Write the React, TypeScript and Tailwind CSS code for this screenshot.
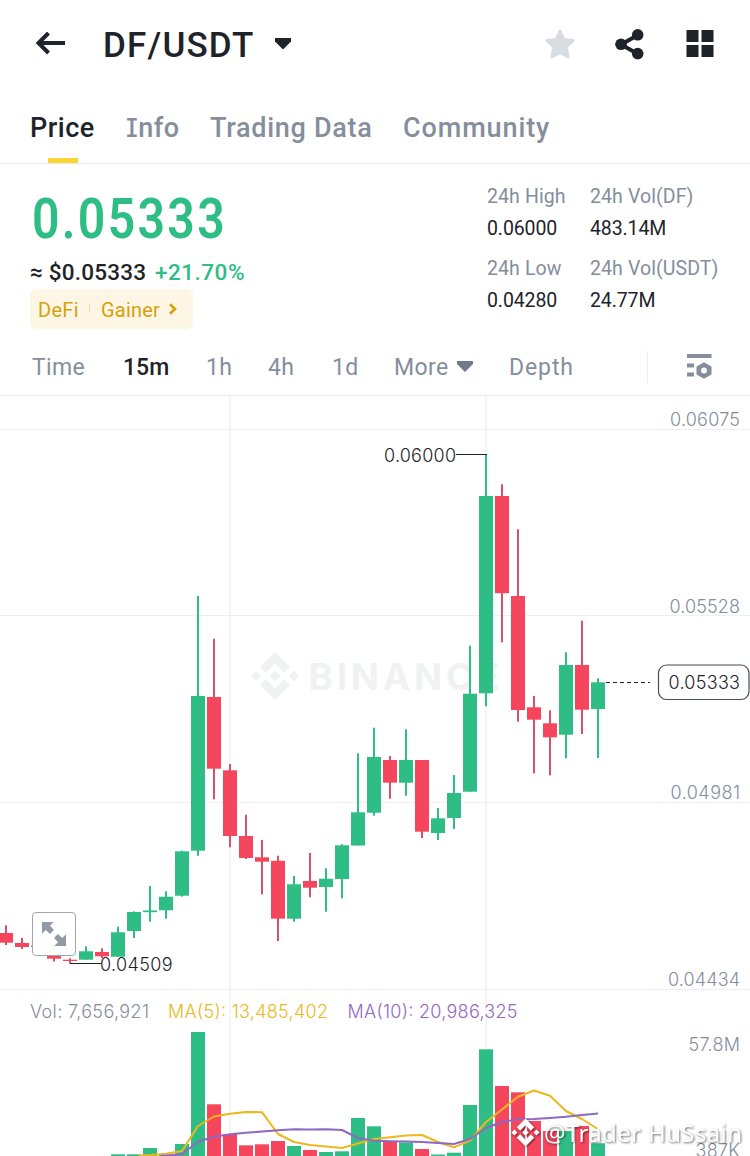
import { useState } from 'react';
import clsx from 'clsx';

type Candle = {
  up: boolean;
  top: number;
  bottom: number;
  high: number;
  low: number;
  vol?: number;
};

const GREEN = '#2ebd85';
const RED = '#f6465d';
const STEP = 16;

// y positions on the chart canvas, one candle every 16px
const candles: Candle[] = [
  { up: false, top: 933, bottom: 942.7, high: 925.3, low: 945 },
  { up: false, top: 943, bottom: 947, high: 938, low: 949 },
  { up: true, top: 945.5, bottom: 947, high: 944, low: 949 },
  { up: false, top: 955, bottom: 958.7, high: 953, low: 961.5 },
  { up: false, top: 959.7, bottom: 961, high: 958.3, low: 963.7 },
  { up: true, top: 951.3, bottom: 959.7, high: 946.3, low: 959.7 },
  { up: false, top: 952, bottom: 956.3, high: 948.3, low: 958 },
  { up: true, top: 932.3, bottom: 956.7, high: 926.7, low: 956.7, vol: 1154.3 },
  { up: true, top: 912, bottom: 931, high: 911.5, low: 938, vol: 1154.3 },
  { up: true, top: 910.5, bottom: 912.2, high: 886, low: 921.7, vol: 1148 },
  { up: true, top: 896.7, bottom: 910.3, high: 891.3, low: 918.7, vol: 1154.7 },
  { up: true, top: 851.3, bottom: 895.7, high: 850.7, low: 896.5, vol: 1144 },
  { up: true, top: 696, bottom: 850.7, high: 596, low: 855.7, vol: 1032 },
  { up: false, top: 697, bottom: 768.7, high: 638.7, low: 799.3, vol: 1104.3 },
  { up: false, top: 770.3, bottom: 836, high: 764, low: 847.3, vol: 1134 },
  { up: false, top: 836, bottom: 858, high: 814.7, low: 859, vol: 1145.3 },
  { up: false, top: 857.3, bottom: 861.7, high: 840, low: 894.3, vol: 1144.3 },
  { up: false, top: 860.8, bottom: 918.7, high: 855.7, low: 941, vol: 1141 },
  { up: true, top: 884.3, bottom: 918.7, high: 876, low: 921.7, vol: 1146 },
  { up: false, top: 881, bottom: 887.7, high: 853, low: 897.3, vol: 1150 },
  { up: true, top: 878.7, bottom: 887, high: 868.3, low: 911.7, vol: 1152 },
  { up: true, top: 845.3, bottom: 879, high: 844.3, low: 898.3, vol: 1151.3 },
  { up: true, top: 812.3, bottom: 845.5, high: 753.3, low: 845.5, vol: 1118 },
  { up: true, top: 757, bottom: 812.7, high: 727.7, low: 815.7, vol: 1126.3 },
  { up: false, top: 760, bottom: 782.7, high: 756, low: 798.7, vol: 1141.5 },
  { up: true, top: 760, bottom: 782.7, high: 729.3, low: 795.7, vol: 1142.5 },
  { up: false, top: 760, bottom: 831.7, high: 760, low: 838, vol: 1149 },
  { up: true, top: 818.3, bottom: 833, high: 808, low: 840, vol: 1154.5 },
  { up: true, top: 793, bottom: 818, high: 775, low: 829, vol: 1152.7 },
  { up: true, top: 693.7, bottom: 791.7, high: 645.7, low: 791.7, vol: 1105 },
  { up: true, top: 496, bottom: 693.3, high: 454.3, low: 706.3, vol: 1049.3 },
  { up: false, top: 496, bottom: 593.2, high: 484.3, low: 642.3, vol: 1086 },
  { up: false, top: 596, bottom: 710, high: 529.3, low: 721.7, vol: 1092.3 },
  { up: false, top: 707.3, bottom: 719.7, high: 696, low: 773.3, vol: 1121 },
  { up: false, top: 723.3, bottom: 737.3, high: 710.3, low: 775.3, vol: 1131 },
  { up: true, top: 665, bottom: 734.7, high: 652.3, low: 758.3, vol: 1131 },
  { up: false, top: 665, bottom: 709.7, high: 620.7, low: 734, vol: 1126 },
  { up: true, top: 682.3, bottom: 709, high: 678.3, low: 758, vol: 1143.3 },
];

const ma5 =
  '138,1155.7 150,1155 166,1153.7 182,1151 198,1126 214,1116.5 230,1113.8 246,1112 262,1112.2 278,1134 294,1142 310,1145 326,1146.5 342,1148 358,1143.5 374,1139 390,1137.3 406,1135.5 422,1135 438,1142 454,1147.3 470,1140.5 486,1122 502,1109.5 518,1096.7 534,1090.5 550,1095.8 566,1111 582,1119 597,1128.5';
const ma10 =
  '160,1156 182,1154.3 198,1141.7 214,1136.8 230,1134.3 246,1132.8 262,1131.5 278,1130.3 294,1129.3 310,1129.5 326,1129.3 342,1130 358,1138 374,1140.8 390,1141.2 406,1141.5 422,1142 438,1143 454,1144 470,1139 486,1128 502,1122 518,1119.3 534,1119 550,1118 566,1116.8 582,1115 598,1113.5';

const axis = [
  { text: '0.06075', x: 670.5, y: 425 },
  { text: '0.05528', x: 670, y: 612 },
  { text: '0.04981', x: 671, y: 798 },
  { text: '0.04434', x: 668.5, y: 985 },
  { text: '57.8M', x: 689, y: 1050 },
  { text: '387K', x: 696, y: 1156 },
];

const BinanceMark = () => (
  <>
    <path d="M0-24 15-9 9.2-3.2 0-12.4-9.2-3.2-15-9Z" />
    <path d="M0 24 15 9 9.2 3.2 0 12.4-9.2 3.2-15 9Z" />
    <path d="M0-5.6 5.6 0 0 5.6-5.6 0Z" />
    <path d="M-19-5.2-13.8 0-19 5.2-24.2 0Z" />
    <path d="M19-5.2 24.2 0 19 5.2 13.8 0Z" />
  </>
);

const Header = () => (
  <header className="mb-0.5 flex h-[88px] items-center">
    <svg className="ml-[35px] h-6 w-[31px]" viewBox="0 0 31 24" fill="none" stroke="#1e2329" strokeWidth="4">
      <path d="M30 11H4M13.5 1 3.5 11l10 10" />
    </svg>
    <h1 className="ml-[37px] w-[156px] pt-1 text-[35px] font-medium tracking-[1.2px] whitespace-nowrap">DF/USDT</h1>
    <svg className="ml-4 h-3 w-4" viewBox="0 0 16 12" fill="#1e2329">
      <path d="M0 0h16v3.5L8 11.5 0 3.5Z" />
    </svg>
    <svg
      className="ml-[254px] h-[31px] w-[31px]"
      viewBox="0 0 31 31"
      fill="#d9dce1"
      stroke="#d9dce1"
      strokeWidth="3"
      strokeLinejoin="round"
    >
      <path d="m15 2.2 3.8 8.3 9.4 1-7 6.5 2 9.8-8.2-4.1-8.2 4.1 2-9.8-7-6.5 9.4-1Z" />
    </svg>
    <svg className="ml-[39px] h-[31px] w-[29px]" viewBox="0 0 29 31" fill="#1e2329">
      <path d="M23 6 6 15.5 23 25" fill="none" stroke="#1e2329" strokeWidth="4" />
      <circle cx="22.7" cy="5.8" r="5.8" />
      <circle cx="6" cy="15.3" r="5.8" />
      <circle cx="22.7" cy="24.6" r="5.8" />
    </svg>
    <svg className="ml-[42px] h-7 w-7" viewBox="0 0 28 28" fill="#1e2329">
      <path d="M.5 0h12v12H.5ZM15.5 0h12v12h-12ZM.5 15h12v12H.5ZM15.5 15h12v12h-12Z" />
    </svg>
  </header>
);

const Tabs = () => (
  <nav className="flex h-[74px] items-center border-b border-[#e6e8ea] pt-1 text-[27px] font-medium whitespace-nowrap text-[#848e9c]">
    <div className="relative ml-[30px] w-[66px] tracking-[0.5px] text-[#1e2329]">
      Price
      <span className="absolute top-[50px] left-[18px] h-[5px] w-[30px] bg-[#fcd535]" />
    </div>
    <div className="ml-[30px] w-[54px] tracking-[0.5px]">
      <span className="font-[Inter] text-[26px] [font-feature-settings:'cv08']">I</span>nfo
    </div>
    <div className="ml-[30px] w-[162px] tracking-[0.7px]">Trading Data</div>
    <div className="ml-[31px] w-[148px] tracking-[0.9px]">Community</div>
  </nav>
);

const Stat = ({ label, value }: { label: string; value: string }) => (
  <div className="text-[19.5px] leading-8 whitespace-nowrap">
    <div className="tracking-[0.1px] text-[#848e9c]">{label}</div>
    <div className="-tracking-[0.1px]">{value}</div>
  </div>
);

const Summary = () => (
  <section className="flex h-[174px]">
    <div className="w-[487px] shrink-0 pt-[27px] pl-[30px]">
      <div className="ml-[1.5px] w-[200px] origin-left scale-x-[0.86] text-[56px] leading-14 font-semibold tracking-[2.7px] text-[#2ebd85]">
        0.05333
      </div>
      <div className="mt-2.5 flex h-[30px] items-center pt-0.5 text-[22.5px] font-medium whitespace-nowrap">
        <span className="w-[125px] tracking-[0.2px]">≈ $0.05333</span>
        <span className="tracking-[0.5px] text-[#2ebd85]">+21.70%</span>
      </div>
      <div className="mt-0.5 flex h-10 w-[163px] items-center rounded-md bg-[#fef6e4] pt-0.5 pl-2 text-[20px] text-[#d6a10b]">
        <span className="w-[51px] tracking-[0.3px]">DeFi</span>
        <span className="-mt-1 h-2 w-px bg-[#ecd9a8]" />
        <span className="ml-[11px] w-[67px] tracking-[0.2px]">Gainer</span>
        <svg className="-mt-0.5 h-3 w-2.5" viewBox="0 0 10 12" fill="none" stroke="#d6a10b" strokeWidth="2.6">
          <path d="m2 1.2 5 4.8-5 4.8" />
        </svg>
      </div>
    </div>
    <div className="grid grid-cols-[103px_auto] content-start gap-y-2 pt-[17px]">
      <Stat label="24h High" value="0.06000" />
      <Stat label="24h Vol(DF)" value="483.14M" />
      <Stat label="24h Low" value="0.04280" />
      <Stat label="24h Vol(USDT)" value="24.77M" />
    </div>
  </section>
);

const intervals = [
  { name: 'Time', box: 'w-[91px]' },
  { name: '15m', box: 'w-[83px]' },
  { name: '1h', box: 'w-[62px]' },
  { name: '4h', box: 'w-16' },
  { name: '1d', box: 'w-[62px]' },
];

const Intervals = () => {
  const [active, setActive] = useState<string>('15m');

  return (
    <div className="flex h-[58px] items-center border-b border-[#e6e8ea] pl-8 text-[23px] whitespace-nowrap text-[#848e9c]">
      {intervals.map(({ name, box }) => (
        <div
          key={name}
          onClick={() => setActive(name)}
          className={clsx('cursor-pointer pt-[3px]', box, active === name ? 'font-medium text-[#1e2329]' : 'tracking-[0.3px]')}
        >
          {name}
        </div>
      ))}
      <div className="w-[63px] pt-[3px] tracking-[0.4px]">More</div>
      <svg className="h-[11px] w-4" viewBox="0 0 16 11" fill="#707a8a">
        <path d="M0 0h16v3L8 11 0 3Z" />
      </svg>
      <div className="ml-9 w-[138px] pt-[3px] tracking-[0.9px]">Depth</div>
      <span className="h-8 w-px bg-[#eaecef]" />
      <svg className="ml-[39px] h-[26px] w-[25px]" viewBox="0 0 25 26" fill="#848e9c">
        <path d="M0 0h24.5v4H0ZM0 9.5h7v4H0ZM0 18.5h7v4H0Z" />
        <path fillRule="evenodd" d="m17 8.2 7.5 4.2v8.2L17 24.8l-7.5-4.2v-8.2ZM17 13.5a3 3 0 1 0 0 6 3 3 0 0 0 0-6Z" />
      </svg>
    </div>
  );
};

const Chart = () => (
  <section className="relative h-[760px]">
    <svg
      className="block h-[760px] w-[750px]"
      viewBox="0 396 750 760"
      fontSize="18"
      fontWeight="350"
      fontFamily="Inter, sans-serif"
    >
      <path
        d="M0 429.5H750M0 615.5H750M0 802.5H750M0 989.5H750M230 396V1156M486 396V1156"
        stroke="#eeeff1"
        strokeWidth="1.2"
      />

      <g fill="#f0f2f2">
        <g transform="translate(275 676)">
          <BinanceMark />
        </g>
        <text x="308.5" y="689.5" fontSize="37" fontWeight="700" textLength="191">
          BINANCE
        </text>
      </g>

      {candles.map((c, i) => {
        const x = 6 + i * STEP;
        const color = c.up ? GREEN : RED;
        return (
          <g key={i} fill={color}>
            <rect x={x - 1} y={c.high} width="2" height={c.low - c.high} fill={c.up ? GREEN : '#d9506a'} />
            <rect x={x - 7} y={c.top} width="14" height={c.bottom - c.top} />
            {c.vol && <rect x={x - 7} y={c.vol} width="14" height={1156 - c.vol} />}
          </g>
        );
      })}

      <g fill="none" strokeWidth="2" strokeLinejoin="round">
        <polyline points={ma5} stroke="#ecb81c" />
        <polyline points={ma10} stroke="#8f68c4" />
      </g>

      <g fill="#1e2329">
        <path d="M456 454.5h31M70 963.5h31" stroke="#1e2329" strokeWidth="1.2" />
        <text x="384" y="461.5" textLength="72">0.06000</text>
        <text x="100" y="971" textLength="72.5">0.04509</text>
        <path d="M606 682.5h44" stroke="#1e2329" strokeDasharray="4 3" strokeWidth="1.2" />
        <rect x="658.5" y="665" width="90.5" height="34.5" rx="8" fill="#fff" stroke="#474d57" strokeWidth="1.2" />
        <text x="668.5" y="689" textLength="71.5">0.05333</text>
      </g>

      <g fill="#848e9c">
        {axis.map((a) => (
          <text key={a.text} x={a.x - 0.5} y={a.y + 0.5} textLength={740.5 - a.x}>
            {a.text}
          </text>
        ))}
        <text x="30" y="1018" textLength="119">Vol: 7,656,921</text>
      </g>
      <text x="168" y="1018" fill="#ecb81c" textLength="160">MA(5): 13,485,402</text>
      <text x="347.5" y="1018" fill="#8f68c4" textLength="170">MA(10): 20,986,325</text>

      <g fill="#fff" className="drop-shadow-[1px_1px_1px_rgba(0,0,0,0.55)]">
        <g transform="translate(525.5 1132.5) scale(0.58)">
          <BinanceMark />
        </g>
        <text x="544" y="1142" fontSize="24" fontWeight="400" textLength="198" fontFamily="Noto Sans, sans-serif">
          @Trader HuSsain
        </text>
      </g>
    </svg>

    <button className="absolute top-[516px] left-8 flex h-11 w-11 items-center justify-center rounded border border-[#a0a7b3] bg-white">
      <svg className="h-6 w-6" viewBox="0 0 24 24" fill="#929aa5">
        <path d="M0 0h11.7L8 3.7l4 4.3-4 4-4.2-4L0 11.7Z" />
        <path d="M24 24H12.3l3.7-3.7-4-4.3 4-4 4.2 4 3.8-3.7Z" />
      </svg>
    </button>
  </section>
);

export default function App() {
  return (
    <main className="w-[750px] overflow-hidden bg-white font-[Roboto,sans-serif] text-[#1e2329]">
      <Header />
      <Tabs />
      <Summary />
      <Intervals />
      <Chart />
    </main>
  );
}
